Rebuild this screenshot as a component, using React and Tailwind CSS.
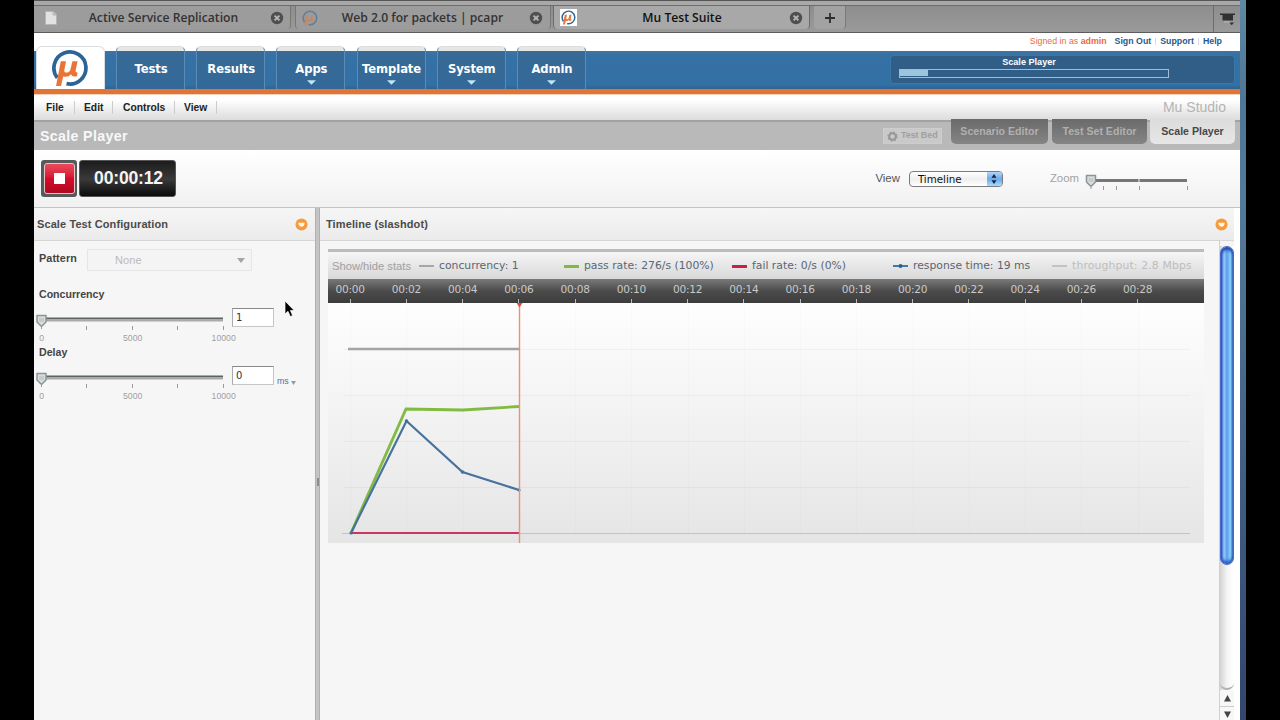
import React from "react";

const sans = "font-['Liberation_Sans',Arial,sans-serif]";

function MuLogo({ className }) {
  return (
    <svg viewBox="0 0 38 38" className={className} fill="none">
      <path d="M6.3 28.8 A16 16 0 1 1 15.5 34.6" stroke="#2c6496" strokeWidth="3.7" />
      <path d="M9.8 12.2 H15 L13.3 21.4 Q13 23.6 15.2 23.6 Q18.6 23.6 19.5 20.2 L21.4 12.2 H26.6 L24.6 21.6 Q24.3 23.8 26.6 23.5 L26 27.2 Q20.6 28.4 20 25.2 Q17.2 28.6 12.2 27.4 L10 37 H5 Z" fill="#e97436" />
    </svg>
  );
}

function CloseIcon() {
  return (
    <svg viewBox="0 0 14 14" className="h-[14px] w-[14px] shrink-0">
      <circle cx="7" cy="7" r="6.2" fill="#4f4f4f" />
      <path d="M4.6 4.6 L9.4 9.4 M9.4 4.6 L4.6 9.4" stroke="#b4b4b4" strokeWidth="2" />
    </svg>
  );
}

function BrowserTabs() {
  const label = "flex-1 text-center text-[12.15px] leading-[24px] font-semibold font-['Open_Sans',sans-serif] whitespace-nowrap";
  return (
    <div className="h-[33px] shrink-0 border-t border-[#555] bg-[#a8a8a8] pt-1">
      <div className="flex h-7 border-t border-b border-t-[#6d6d6d] border-b-[#5c5c5c] bg-linear-to-b from-[#8d8d8d] to-[#9a9a9a]">
        <div className="flex h-[23px] w-[257px] items-center rounded-b-[4px] border-r border-[#777] bg-[#9c9c9c] pr-[6px] pl-[11px]">
          <svg viewBox="0 0 12 14" className="h-[14px] w-[12px]">
            <path d="M0.5 0.5 H8 L11.5 4 V13.5 H0.5 Z" fill="#e2e2e2" stroke="#b5b5b5" />
            <path d="M8 0.5 V4 H11.5" fill="#c4c4c4" stroke="#b5b5b5" />
          </svg>
          <span className={`${label} pr-1 pl-[4px] text-[#333]`}>Active Service Replication</span>
          <CloseIcon />
        </div>
        <div className="ml-[4px] flex h-[23px] w-[256px] items-center rounded-b-[4px] border-r border-l border-[#777] bg-[#9c9c9c] pr-[7px] pl-[6px]">
          <MuLogo className="h-4 w-4 opacity-50" />
          <span className={`${label} pr-[2px] text-[#333]`}>Web 2.0 for packets | pcapr</span>
          <CloseIcon />
        </div>
        <div className="ml-[2px] flex h-[23px] w-[257px] items-center rounded-b-[4px] border-r border-l border-[#6c6c6c] bg-[#a8a8a8] pr-[6px] pl-[6px]">
          <div className="h-[17px] w-[17px] bg-white p-px">
            <MuLogo className="h-[15px] w-[15px]" />
          </div>
          <span className={`${label} pr-[2px] text-[#111]`}>Mu Test Suite</span>
          <CloseIcon />
        </div>
        <div className="ml-[4px] flex h-[23px] w-[32px] items-center justify-center rounded-b-[4px] border-r border-[#7a7a7a] bg-[#a2a2a2]">
          <svg viewBox="0 0 12 12" className="h-3 w-3">
            <path d="M6 1 V11 M1 6 H11" stroke="#2d2d2d" strokeWidth="1.8" />
          </svg>
        </div>
        <div className="ml-auto flex w-[27px] items-center justify-center border-l border-[#6c6c6c]">
          <svg viewBox="0 0 15 13" className="h-[13px] w-[15px]">
            <path d="M0 0.5 H15 V2 H13 V7.5 H2.5 V2 H0 Z" fill="#303030" />
            <path d="M4 9 H10" stroke="#b9b9b9" />
            <path d="M9.5 9.5 H14 L11.7 12.3 Z" fill="#303030" />
          </svg>
        </div>
      </div>
    </div>
  );
}

const navItems = [
  ["Tests", false],
  ["Results", false],
  ["Apps", true],
  ["Template", true],
  ["System", true],
  ["Admin", true],
];

function Header() {
  return (
    <header className="flex h-[62px] shrink-0 bg-[linear-gradient(to_bottom,#fff_18px,#3f74a0_18px,#3571a5_22px,#3370a4_52px,#2f628f_56px,#e27436_56px,#e27436_61px,#f3d3bd_61px)]">
      <div className="mt-[13px] ml-[2px] flex h-[43px] w-[69px] items-center justify-center rounded-t-[6px] border border-b-0 border-[#d8dde2] bg-white">
        <MuLogo className="mr-px h-[38px] w-[38px] shrink-0" />
      </div>
      <nav className="mt-[13px] ml-[11px] flex gap-[11.2px]">
        {navItems.map(([name, menu]) => (
          <div key={name} className="flex h-[43px] w-[69px] flex-col items-center rounded-t-[5px] border border-b-0 border-[#5c8cb5] border-t-[#ddd] bg-[linear-gradient(to_bottom,#e6e6e4_4px,#376a95_4px,#33699a_40px)]">
            <span className="mt-[15px] ml-px text-[11.6px] leading-[14px] font-bold tracking-[-0.1px] text-white font-['DejaVu_Sans',Verdana,sans-serif]">{name}</span>
            {menu && (
              <svg viewBox="0 0 10 5" className="mt-[4px] ml-px h-[5px] w-[9px]">
                <path d="M0 0 H10 L5 5 Z" fill="#bfe4f2" />
              </svg>
            )}
          </div>
        ))}
      </nav>
      <div className={`ml-auto flex w-[346px] flex-col ${sans}`}>
        <div className="flex h-[17px] items-center justify-end pr-[18px] text-[8.8px] whitespace-nowrap">
          <span className="text-[#ea6a45]">Signed in as <b>admin</b></span>
          <b className="ml-[8px] text-[#28598a]">Sign Out</b>
          <i className="mx-[4px] h-[7px] w-px bg-[#d4dbe2]" />
          <b className="text-[#28598a]">Support</b>
          <i className="mx-[4px] h-[7px] w-px bg-[#d4dbe2]" />
          <b className="text-[#28598a]">Help</b>
        </div>
        <div className="mt-[5px] mr-[5px] ml-[-4px] h-[29px] rounded-[4px] border border-[#3a78ab] bg-[#315e87] pl-[8px]">
          <div className="w-[270px]">
            <div className="-mt-px pr-[10px] text-center text-[9.1px] leading-[14px] font-bold text-white">Scale Player</div>
            <div className="h-[9px] border border-[#a4bccf]">
              <div className="h-[6px] w-[28px] bg-[#9cc4dc]" />
            </div>
          </div>
        </div>
      </div>
    </header>
  );
}

function MenuBar() {
  return (
    <div className={`flex h-[27px] shrink-0 items-center justify-between border-b-2 border-[#a2a2a2] bg-linear-to-b from-white from-20% to-[#dcdcdc] ${sans}`}>
      <div className="flex h-[13px] text-[10.3px] leading-[13px] font-bold text-[#222]">
        <span className="w-[41px] border-r border-[#ccc] pl-[12px]">File</span>
        <span className="w-[38px] border-r border-[#ccc] pl-[9px]">Edit</span>
        <span className="w-[62px] border-r border-[#ccc] pl-[10px]">Controls</span>
        <span className="w-[42px] border-r border-[#ccc] pl-[9px]">View</span>
      </div>
      <span className="pr-[14px] text-[14px] text-[#b4b4b4]">Mu Studio</span>
    </div>
  );
}

function TitleBar() {
  const tab = "flex h-[25px] items-center justify-center rounded-b-[5px] text-[10.6px] font-bold";
  return (
    <div className={`flex h-[28px] shrink-0 bg-[#b9b9b9] ${sans}`}>
      <h1 className="pl-[6px] text-[14.2px] leading-[28px] font-bold tracking-[0.35px] text-[#f8f8f8]">Scale Player</h1>
      <div className="mt-[6px] ml-auto flex h-[16px] w-[59px] items-center gap-[3px] border border-[#cdcdcd] bg-[#c9c9c9] pl-[3px] text-[9px] font-bold whitespace-nowrap text-[#a0a0a0]">
        <svg viewBox="0 0 12 12" className="h-[11px] w-[11px] shrink-0" fill="none" stroke="#969696">
          <circle cx="6" cy="6" r="3.6" strokeWidth="2.2" />
          <circle cx="6" cy="6" r="5" strokeWidth="1.2" strokeDasharray="2 1.93" />
        </svg>
        <span className="tracking-[-0.1px]">Test Bed</span>
      </div>
      <div className="-mt-[3px] ml-[9px] flex gap-[4px] pr-[5px]">
        <div className={`${tab} w-[97px] bg-linear-to-b from-[#6a6a6a] to-[#858585] text-[#b0b0b0]`}>Scenario Editor</div>
        <div className={`${tab} w-[95px] bg-linear-to-b from-[#6a6a6a] to-[#858585] text-[#b0b0b0]`}>Test Set Editor</div>
        <div className={`${tab} -ml-px w-[85px] bg-linear-to-b from-[#dcdcdc] to-[#e6e6e6] text-[#484848]`}>Scale Player</div>
      </div>
    </div>
  );
}

function Thumb() {
  return (
    <g>
      <path d="M1.5 1.5 H10.5 V8 L6.5 12 H5.5 L1.5 8 Z" fill="#d9dddd" stroke="#8b9496" strokeWidth="1.5" strokeLinejoin="round" />
      <path d="M3.5 5 H8.5 M3.5 7 H8.5" stroke="#a9b1b2" strokeWidth="0.8" />
      <path d="M6 12 V15" stroke="#999" />
    </g>
  );
}

function Toolbar() {
  return (
    <div className={`flex h-[58px] shrink-0 items-center border-b border-[#c4c4c4] bg-linear-to-b from-white to-[#f1f1f1] ${sans}`}>
      <div className="ml-[7px] flex h-[37px] w-[36px] items-center justify-center rounded-[3px] bg-[#555b5b]">
        <div className="flex h-[31px] w-[31px] items-center justify-center rounded-[3px] border border-[#e3c4c8] bg-linear-to-b from-[#e8495d] via-[#d80a2b] to-[#ae0820]">
          <div className="h-[11px] w-[11px] bg-white" />
        </div>
      </div>
      <div className="ml-[2px] flex h-[37px] w-[97px] items-center justify-center rounded-[3px] border border-[#555] bg-linear-to-b from-[#1c1c1c] via-[#3a3a3a] via-52% to-[#0c0c0c] pl-[2px] text-[17.6px] font-bold tracking-[-0.2px] text-[#f4f4f4]">00:00:12</div>
      <span className="ml-auto text-[11.4px] text-[#555]">View</span>
      <div className="ml-[9px] flex h-[16px] w-[94px] items-center overflow-hidden rounded-[4px] border border-[#7b7b7b] bg-linear-to-b from-white via-[#eee] to-white pl-[8px] font-['DejaVu_Sans',sans-serif] text-[10.3px] text-[#111]">
        <span className="leading-[14px]">Timeline</span>
        <span className="ml-auto flex h-full w-[15px] items-center justify-center bg-linear-to-b from-[#b5d5f7] via-[#69a9ea] to-[#a5dcff]">
          <svg viewBox="0 0 6 10" className="h-[10px] w-[6px]" fill="#17233b">
            <path d="M3 0 L5.5 3.8 H0.5 Z M3 10 L5.5 6.2 H0.5 Z" />
          </svg>
        </span>
      </div>
      <span className="ml-[47px] text-[11.4px] text-[#a2a2a2]">Zoom</span>
      <svg viewBox="0 0 104 20" className="mt-[8px] mr-[51px] ml-[6px] h-[20px] w-[104px]">
        <path d="M8 7.5 H102" stroke="#767679" strokeWidth="3" />
        <path d="M54 5 V10" stroke="#eee" />
        <path d="M18.5 13 V17 M31.5 13 V17 M54.5 13 V17 M102.5 13 V17" stroke="#999" />
        <g transform="translate(0,1)"><Thumb /></g>
      </svg>
    </div>
  );
}

function PanelHeader({ title, className }) {
  return (
    <div className={`flex h-[33px] shrink-0 items-center justify-between border-b border-[#d6d6d6] bg-linear-to-b from-[#f6f6f6] to-[#ebebeb] ${className}`}>
      <h2 className="text-[11px] font-bold tracking-[0.1px] text-[#4b4b4b]">{title}</h2>
      <svg viewBox="0 0 14 14" className="mt-px h-[13px] w-[13px]">
        <circle cx="7" cy="7" r="6.5" fill="#f79a3b" />
        <path d="M3.5 5 H10.5 Q10 9 7 9.5 Q4 9 3.5 5 Z" fill="#fff3e2" />
      </svg>
    </div>
  );
}

function SliderField({ label, value, unit, className }) {
  return (
    <div className={className}>
      <div className="pl-[5px] text-[10.6px] leading-[13px] font-bold text-[#444]">{label}</div>
      <div className="mt-[7px] flex">
        <div className="w-[196px] shrink-0">
          <svg viewBox="0 0 196 24" className="block h-[24px] w-[196px]">
            <path d="M8 10.5 H189" stroke="#5e6464" strokeWidth="2" />
            <path d="M8 12.5 H189" stroke="#a7abab" strokeWidth="2" />
            <path d="M52.5 18 V22 M98.5 18 V22 M143.5 18 V22 M189.5 18 V22" stroke="#999" />
            <g transform="translate(1.5,6)"><Thumb /></g>
          </svg>
          <div className="grid grid-cols-[14px_168px_14px] justify-items-center pl-[0.7px] text-[8.7px] leading-[13px] text-[#a0a0a0]">
            <span>0</span>
            <span>5000</span>
            <span>10000</span>
          </div>
        </div>
        <div className="ml-[2px] h-[19px] w-[42px] border border-[#c6c6c6] border-t-[#888] border-l-[#aaa] bg-white pl-[3px] font-['DejaVu_Sans',sans-serif] text-[10px] leading-[17px] text-[#333]">{value}</div>
        {unit && (
          <div className="mt-[9px] ml-[3px] flex h-[14px] items-center gap-[2px] text-[8.8px] text-[#3f76a8]">
            {unit}
            <svg viewBox="0 0 5 4" className="mt-[2px] h-[4px] w-[5px]"><path d="M0 0 H5 L2.5 4 Z" fill="#999" /></svg>
          </div>
        )}
      </div>
    </div>
  );
}

function ConfigPanel() {
  return (
    <section className="flex w-[281px] shrink-0 flex-col bg-[#f6f6f6]">
      <PanelHeader title="Scale Test Configuration" className="pr-[7px] pl-[3px]" />
      <div className="mt-[8px] flex">
        <span className="w-[53px] pl-[5px] text-[10.8px] leading-[18px] font-bold tracking-[0.1px] text-[#444]">Pattern</span>
        <div className="flex h-[22px] w-[165px] items-center justify-between border border-[#e6e6e6] bg-[#f4f4f4] pr-[6px] pl-[27px] text-[11px] tracking-[0.1px] text-[#bababa]">
          None
          <svg viewBox="0 0 8 5" className="h-[5px] w-[8px]"><path d="M0 0 H8 L4 5 Z" fill="#a5a5a5" /></svg>
        </div>
      </div>
      <SliderField label="Concurrency" value="1" className="mt-[17px]" />
      <SliderField label="Delay" value="0" unit="ms" className="mt-[1px]" />
    </section>
  );
}

const ticks = ["00:00", "00:02", "00:04", "00:06", "00:08", "00:10", "00:12", "00:14", "00:16", "00:18", "00:20", "00:22", "00:24", "00:26", "00:28"];

function Legend() {
  return (
    <div className="flex h-[30px] items-center overflow-hidden border-t-[3px] border-[#bcbcbc] bg-linear-to-b from-[#f6f6f6] to-[#d8d8d8] pt-px pl-[4px] font-['DejaVu_Sans',sans-serif] text-[10.8px] whitespace-nowrap text-[#5a6672]">
      <span className={`w-[87px] text-[11.2px] text-[#a0a0a0] ${sans}`}>Show/hide stats</span>
      <span className="flex w-[145px] items-center gap-[5px]">
        <i className="h-[2px] w-[15px] bg-[#a6a6a6]" />concurrency: 1
      </span>
      <span className="flex w-[168px] items-center gap-[5px]">
        <i className="h-[3px] w-[15px] bg-[#80bb3d]" />pass rate: 276/s (100%)
      </span>
      <span className="flex w-[161px] items-center gap-[5px]">
        <i className="h-[3px] w-[15px] bg-[#c91f45]" />fail rate: 0/s (0%)
      </span>
      <span className="flex w-[159px] items-center gap-[5px]">
        <svg viewBox="0 0 15 4" className="h-[4px] w-[15px]"><path d="M0 2 H15" stroke="#4179ad" strokeWidth="2" /><circle cx="7.5" cy="2" r="2" fill="#2d5d8c" /></svg>response time: 19 ms
      </span>
      <span className="flex items-center gap-[5px] tracking-[0.15px] text-[#bdbdbd]">
        <i className="h-[2px] w-[15px] bg-[#c2c2c2]" />throughput: 2.8 Mbps
      </span>
    </div>
  );
}

function Ruler() {
  return (
    <div className="h-[24px] overflow-hidden bg-linear-to-b from-[#7a7a7a] via-[#4b4b4b] to-[#3c3c3c]">
      <div className="-ml-[6px] flex">
        {ticks.map((t) => (
          <div key={t} className="flex w-[56.25px] shrink-0 flex-col items-center font-['DejaVu_Sans',sans-serif] text-[10.6px] leading-[21px] text-[#c9c9c9]">
            <span className="h-[20px] tracking-[-0.3px]">{t}</span>
            <i className="h-[4px] w-px bg-[#bbb]" />
          </div>
        ))}
      </div>
    </div>
  );
}

function Chart() {
  return (
    <svg viewBox="0 0 876 240" className="block h-[240px] w-[876px]" fill="none">
      <defs>
        <linearGradient id="plot" x1="0" y1="0" x2="0" y2="1">
          <stop offset="0" stopColor="#fefefe" />
          <stop offset="0.45" stopColor="#f3f3f3" />
          <stop offset="1" stopColor="#e5e5e5" />
        </linearGradient>
      </defs>
      <rect width="876" height="240" fill="url(#plot)" />
      {ticks.map((t, i) => (
        <path key={t} d={`M${Math.round(22 + i * 56.25) + 0.5} 0 V230`} stroke="#000" strokeOpacity="0.016" />
      ))}
      <path d="M16 46.5 H862 M16 92.5 H862 M16 138.5 H862 M16 184.5 H862" stroke="#000" strokeOpacity="0.035" />
      <path d="M14 230.5 H862" stroke="#c2c2c2" />
      <path d="M20 46 H191" stroke="#a3a3a3" strokeWidth="2.4" />
      <path d="M23 230 L78 106 L135 107 L191 103.5" stroke="#82bb43" strokeWidth="2.8" />
      <path d="M23 230 H191" stroke="#cc3560" strokeWidth="1.8" />
      <path d="M23 230 L78.5 118 L134.5 169 L191 187" stroke="#47729c" strokeWidth="2.2" />
      <g fill="#44719c">
        <circle cx="23" cy="230" r="1.6" />
        <circle cx="78.5" cy="118" r="1.8" />
        <circle cx="134.5" cy="169" r="1.8" />
        <circle cx="191" cy="187" r="1.6" />
      </g>
      <path d="M191.5 0 V240" stroke="#ee9076" strokeWidth="1.4" />
      <path d="M188.5 0 H194.5 L191.5 4.5 Z" fill="#e84a42" />
    </svg>
  );
}

function Scrollbar() {
  return (
    <div className="flex w-[15px] shrink-0 flex-col border-l border-[#d0d0d0] bg-linear-to-r from-[#d4d4d4] via-[#f4f4f4] to-white">
      <div className="h-[5px] shrink-0 bg-[#f4f4f4]" />
      <div className="h-[319px] shrink-0 rounded-[7px] border border-[#4668c8] bg-[linear-gradient(to_right,#3a5fd0,#9cccf8_25%,#5a9cf0_50%,#8cd6ff_78%,#5a8fc0)] shadow-[inset_0_3px_3px_#2448a8,inset_0_-3px_3px_#2b60c8]" />
      <div className="h-[125px] shrink-0 rounded-b-[7px] border-b-2 border-[#b0b0b0]" />
      <div className="flex h-[17px] shrink-0 items-center justify-center border-b border-[#ccc] bg-[#f7f7f7]">
        <svg viewBox="0 0 7 7" className="h-[7px] w-[7px]"><path d="M3.5 0 L7 6.5 H0 Z" fill="#444" /></svg>
      </div>
      <div className="flex flex-1 items-center justify-center bg-[#f7f7f7]">
        <svg viewBox="0 0 7 7" className="mt-[2px] h-[7px] w-[7px]"><path d="M0 0.5 H7 L3.5 7 Z" fill="#444" /></svg>
      </div>
    </div>
  );
}

function TimelinePanel() {
  return (
    <section className="flex w-[914px] shrink-0 flex-col bg-[#f6f6f6]">
      <PanelHeader title="Timeline (slashdot)" className="pr-[6px] pl-[6px]" />
      <div className="flex min-h-0 flex-1">
        <div className="flex-1 pt-[8px] pl-[8px]">
          <div className="w-[876px]">
            <Legend />
            <Ruler />
            <Chart />
          </div>
        </div>
        <Scrollbar />
      </div>
    </section>
  );
}

export default function App() {
  return (
    <div className="relative flex h-[720px] w-[1280px] overflow-hidden bg-black pl-[34px]">
      <main className="flex w-[1206px] shrink-0 flex-col bg-white">
        <BrowserTabs />
        <Header />
        <MenuBar />
        <TitleBar />
        <Toolbar />
        <div className={`flex min-h-0 flex-1 ${sans}`}>
          <ConfigPanel />
          <div className="flex w-[5px] shrink-0 items-center justify-center border-r border-l border-[#b0b0b0] bg-[#c4c4c4]">
            <div className="mt-[36px] h-[8px] w-[2px] bg-[#8c8c8c]" />
          </div>
          <TimelinePanel />
        </div>
      </main>
      <div className="w-[6px] shrink-0 bg-[linear-gradient(to_bottom,#5f89a3_0,#4f7693_100px,#557a98_200px,#3d5a80_520px,#33456a)]" />
      <svg viewBox="0 0 12 18" className="absolute top-[300px] left-[284px] h-[18px] w-[12px]">
        <path d="M1 1 V14 L4 11.3 L6.3 16.5 L8.6 15.5 L6.4 10.5 H10.2 Z" fill="#000" stroke="#fff" strokeWidth="0.7" />
      </svg>
    </div>
  );
}
